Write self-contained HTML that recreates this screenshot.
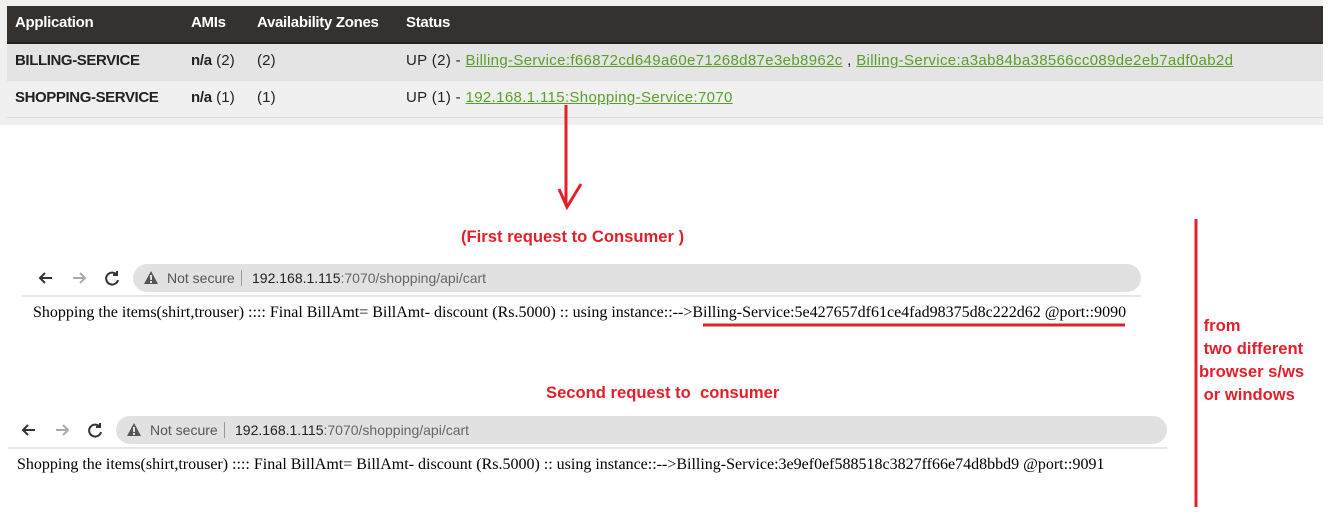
<!DOCTYPE html>
<html><head><meta charset="utf-8"><style>
*{margin:0;padding:0;box-sizing:border-box}
body{width:1329px;height:521px;background:#fff;position:relative;overflow:hidden;font-family:"Liberation Sans",sans-serif}
.abs{position:absolute;white-space:nowrap}
.top{position:absolute;left:0;top:0;width:1323px;height:125px;background:#f0f0f0}
.hdr{position:absolute;left:7px;top:6px;width:1316px;height:38px;background:#35312e;border-bottom:2px solid #222}
.hdr span{position:absolute;top:8px;color:#fff;font-weight:bold;font-size:15px;letter-spacing:-0.3px}
.r1{position:absolute;left:7px;top:44px;width:1316px;height:37px;background:#e4e4e4;border-bottom:1px solid #dde0e4}
.r2{position:absolute;left:7px;top:81px;width:1316px;height:37px;background:#f0f0f0;border-bottom:1px solid #dcdcdc}
.row span{position:absolute;top:8px;font-size:15px;color:#222;letter-spacing:0.15px}
.row span.st{letter-spacing:0.35px}
b{letter-spacing:-0.3px}
a{color:#5a9e2a;text-decoration:underline}
.red{color:#e3202a;font-weight:bold;font-size:16.6px;position:absolute;white-space:nowrap}
.url{position:absolute;height:28px;border-radius:14px;background:#e1e1e1;font-size:14px;color:#333}
.url .ns{position:absolute;top:6px;color:#555}
.url .u{position:absolute;top:6px;color:#222}
.url .sep{position:absolute;top:6px;width:1px;height:16px;background:#999}
.body{position:absolute;font-family:"Liberation Serif",serif;font-size:16px;color:#000;white-space:nowrap}
svg{z-index:5}
</style></head><body>
<div class="top"></div>
<div class="hdr">
<span style="left:8px">Application</span>
<span style="left:184px">AMIs</span>
<span style="left:250px">Availability Zones</span>
<span style="left:399px">Status</span>
</div>
<div class="r1 row">
<span style="left:8px;font-weight:bold;letter-spacing:-0.4px">BILLING-SERVICE</span>
<span style="left:184px"><b>n/a</b> (2)</span>
<span style="left:250px">(2)</span>
<span class="st" style="left:399px">UP (2) - <a>Billing-Service:f66872cd649a60e71268d87e3eb8962c</a> , <a>Billing-Service:a3ab84ba38566cc089de2eb7adf0ab2d</a></span>
</div>
<div class="r2 row">
<span style="left:8px;font-weight:bold;letter-spacing:-0.4px">SHOPPING-SERVICE</span>
<span style="left:184px"><b>n/a</b> (1)</span>
<span style="left:250px">(1)</span>
<span class="st" style="left:399px">UP (1) - <a>192.168.1.115:Shopping-Service:7070</a></span>
</div>

<div class="url" style="left:133px;top:264px;width:1008px">
<span class="ns" style="left:34px">Not secure</span><span class="sep" style="left:108px"></span>
<span class="u" style="left:119px">192.168.1.115<span style="color:#666">:7070/shopping/api/cart</span></span>
</div>
<div class="body" style="left:33px;top:304px">Shopping the items(shirt,trouser) :::: Final BillAmt= BillAmt- discount (Rs.5000) :: using instance::--&gt;Billing-Service:5e427657df61ce4fad98375d8c222d62 @port::9090</div>

<div class="url" style="left:116px;top:416px;width:1051px">
<span class="ns" style="left:34px">Not secure</span><span class="sep" style="left:108px"></span>
<span class="u" style="left:119px">192.168.1.115<span style="color:#666">:7070/shopping/api/cart</span></span>
</div>
<div class="body" style="left:17px;top:456px">Shopping the items(shirt,trouser) :::: Final BillAmt= BillAmt- discount (Rs.5000) :: using instance::--&gt;Billing-Service:3e9ef0ef588518c3827ff66e74d8bbd9 @port::9091</div>

<svg class="abs" style="left:0;top:0" width="1329" height="521">
<line x1="566" y1="105" x2="566" y2="205" stroke="#e3202a" stroke-width="3"/>
<polyline points="559,189 567,207 581,184" fill="none" stroke="#e3202a" stroke-width="3"/>
<line x1="1196" y1="219" x2="1196" y2="507" stroke="#e3202a" stroke-width="3"/>
<line x1="703" y1="325" x2="1125" y2="325" stroke="#e3202a" stroke-width="3"/>
<g stroke="#333" stroke-width="2" fill="none">
<path d="M52 278H40M45 273L40 278L45 283"/>
<path d="M73 278H85M80 273L85 278L80 283" stroke="#aaa"/>
<path d="M117 275A6 6 0 1 0 118 280M117 271V275H113"/>
<path d="M35 430H23M28 425L23 430L28 435"/>
<path d="M56 430H68M63 425L68 430L63 435" stroke="#aaa"/>
<path d="M100 427A6 6 0 1 0 101 432M100 423V427H96"/>
</g>
<line x1="22" y1="296" x2="1141" y2="296" stroke="#ccc"/>
<line x1="8" y1="448" x2="1167" y2="448" stroke="#ccc"/>
<polygon points="151,271 144,284 158,284" fill="#555"/>
<rect x="150" y="275" width="2" height="5" fill="#e1e1e1"/><rect x="150" y="281" width="2" height="2" fill="#e1e1e1"/>
<polygon points="134,423 127,436 141,436" fill="#555"/>
<rect x="133" y="427" width="2" height="5" fill="#e1e1e1"/><rect x="133" y="433" width="2" height="2" fill="#e1e1e1"/>
</svg>

<div class="red" style="left:461px;top:227px">(First request to Consumer )</div>
<div class="red" style="left:546px;top:383px">Second request to&nbsp; consumer</div>
<div class="red" style="left:1199px;top:314px;line-height:23px">&nbsp;from<br>&nbsp;two different<br>browser s/ws<br>&nbsp;or windows</div>
</body></html>
